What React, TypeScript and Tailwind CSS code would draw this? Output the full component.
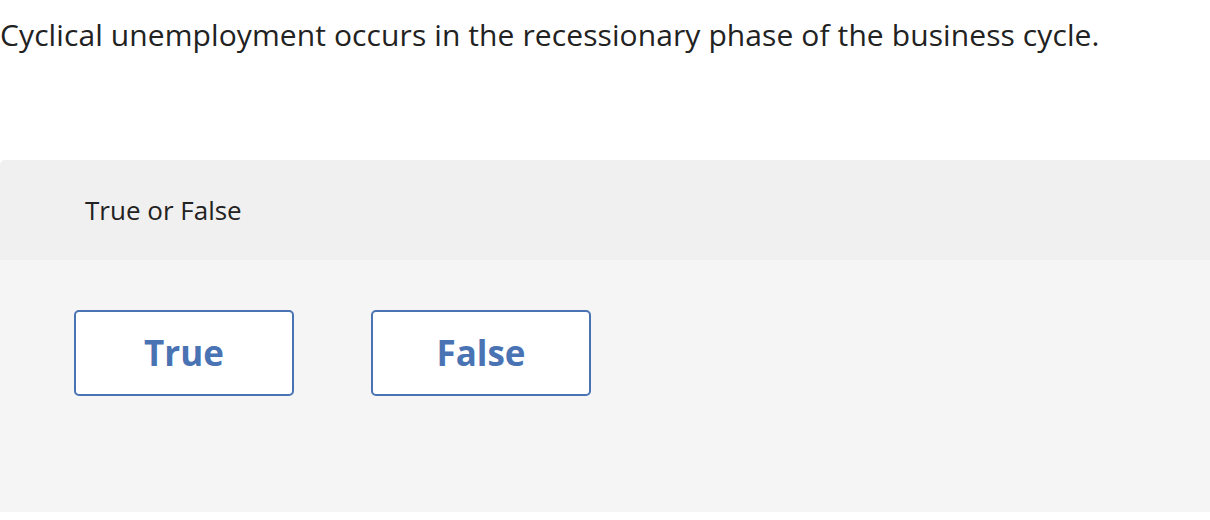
export default function App() {
  return (
    <div className="w-[1210px] h-[520px] bg-white font-['Open_Sans','Liberation_Sans',sans-serif] text-[#222]">
      <p className="pt-[15px] text-[30px] leading-[40px] tracking-[0.1px]">
        Cyclical unemployment occurs in the recessionary phase of the business cycle.
      </p>
      <section className="mt-[105px] rounded-tl-[5px] overflow-hidden">
        <div className="h-[100px] bg-[#f0f0f0] flex items-center pl-[85px]">
          <span className="text-[26px]">True or False</span>
        </div>
        <div className="h-[252px] bg-[#f5f5f5] flex gap-[77px] pl-[74px] pt-[50px]">
          <button className="w-[220px] h-[86px] bg-white border-2 border-[#4a73b4] rounded-[5px] text-[#4a73b4] text-[35px] font-bold">
            True
          </button>
          <button className="w-[220px] h-[86px] bg-white border-2 border-[#4a73b4] rounded-[5px] text-[#4a73b4] text-[35px] font-bold">
            False
          </button>
        </div>
      </section>
    </div>
  );
}
